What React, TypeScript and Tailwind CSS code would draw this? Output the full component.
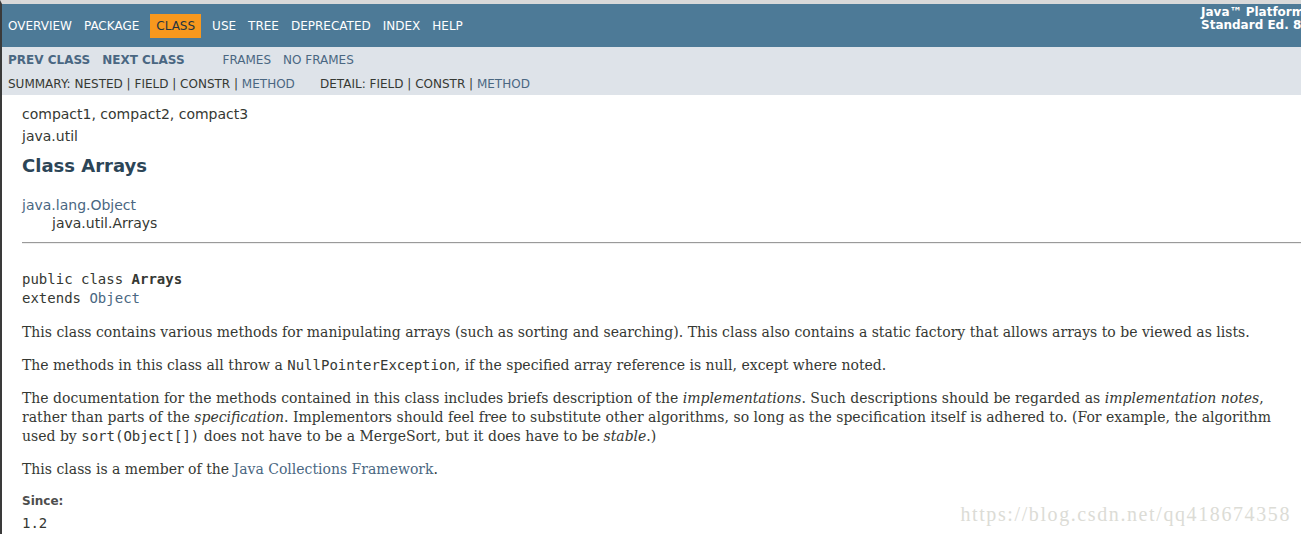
import React from 'react';

const sans = "font-['DejaVu_Sans',sans-serif]";
const serif = "font-['DejaVu_Serif',serif]";
const mono = "font-['DejaVu_Sans_Mono',monospace]";

const topNav = ['OVERVIEW', 'PACKAGE', 'CLASS', 'USE', 'TREE', 'DEPRECATED', 'INDEX', 'HELP'];

export default function App() {
  return (
    <div className="relative h-[534px] w-[1301px] overflow-hidden border-t-4 border-l-2 border-t-[#d9d9d9] border-l-[#3a3a3a] bg-white text-[#353833]">
      {/* Top navigation bar */}
      <div className={`flex h-[43px] items-start justify-between bg-[#4d7a97] text-white ${sans}`}>
        <ul className="flex pt-[10px] text-[12px] leading-[14px]">
          {topNav.map((item) =>
            item === 'CLASS' ? (
              <li key={item} className="mx-[5px] bg-[#f8981d] px-[6px] py-[5px] text-[#253441]">
                {item}
              </li>
            ) : (
              <li key={item} className="px-[6px] py-[5px]">
                {item}
              </li>
            )
          )}
        </ul>
        <div className="w-[100px] shrink-0 whitespace-nowrap pt-[2px] text-[12px] font-bold leading-[13px]">
          Java™ Platform
          <br />
          Standard Ed. 8
        </div>
      </div>

      {/* Sub navigation */}
      <div className={`bg-[#dee3e9] text-[12px] leading-[14px] ${sans}`}>
        <div className="flex pt-[6px] pb-[4px]">
          <span className="px-[6px] font-bold text-[#4a6782]">PREV CLASS</span>
          <span className="px-[6px] font-bold text-[#4a6782]">NEXT CLASS</span>
          <span className="ml-[26px] px-[6px] text-[#4a6782]">FRAMES</span>
          <span className="px-[6px] text-[#4a6782]">NO FRAMES</span>
        </div>
        <div className="flex pt-[6px] pb-[4px] pl-[6px]">
          <div className="w-[312px]">
            SUMMARY:&nbsp;NESTED&nbsp;|&nbsp;FIELD&nbsp;|&nbsp;CONSTR&nbsp;|&nbsp;
            <span className="text-[#4a6782]">METHOD</span>
          </div>
          <div>
            DETAIL:&nbsp;FIELD&nbsp;|&nbsp;CONSTR&nbsp;|&nbsp;
            <span className="text-[#4a6782]">METHOD</span>
          </div>
        </div>
      </div>

      {/* Class header */}
      <div className={`pl-[20px] pt-[9px] text-[14px] ${sans}`}>
        <div className="leading-[20px]">compact1, compact2, compact3</div>
        <div className="mt-[2px] leading-[20px]">java.util</div>
        <h2 className="mt-[8px] text-[18px] font-bold leading-[24px] text-[#2c4557]">Class Arrays</h2>
        <div className="mt-[18px] leading-[18px] text-[#4a6782]">java.lang.Object</div>
        <div className="pl-[30px] leading-[18px]">java.util.Arrays</div>
        <div className="mt-[10px] border-t border-b border-t-[#9a9a9a] border-b-[#eeeeee]" />
      </div>

      {/* Description */}
      <div className="pl-[20px] text-[14px]">
        <pre className={`mt-[26px] leading-[19px] ${mono}`}>
          public class <b>Arrays</b>
          {'\n'}extends <span className="text-[#4a6782]">Object</span>
        </pre>
        <div className={`leading-[19px] ${serif}`}>
          <p className="mt-[15px]">
            This class contains various methods for manipulating arrays (such as sorting and searching). This class also contains a static factory that allows arrays to be viewed as lists.
          </p>
          <p className="mt-[14px]">
            The methods in this class all throw a <code className={mono}>NullPointerException</code>, if the specified array reference is null, except where noted.
          </p>
          <p className="mt-[14px] pr-[20px]">
            The documentation for the methods contained in this class includes briefs description of the <i>implementations</i>. Such descriptions should be regarded as <i>implementation notes</i>, rather than parts of the <i>specification</i>. Implementors should feel free to substitute other algorithms, so long as the specification itself is adhered to. (For example, the algorithm used by <code className={mono}>sort(Object[])</code> does not have to be a MergeSort, but it does have to be <i>stable</i>.)
          </p>
          <p className="mt-[14px]">
            This class is a member of the <span className="text-[#4a6782]">Java Collections Framework</span>.
          </p>
        </div>
        <div className={`mt-[14px] text-[12px] font-bold leading-[16px] text-[#4e4e4e] ${sans}`}>Since:</div>
        <div className={`mt-[5px] leading-[19px] ${mono}`}>1.2</div>
      </div>

      {/* Watermark */}
      <div className="absolute bottom-[8px] right-[10px] font-['Liberation_Serif',serif] text-[20px] leading-[24px] tracking-[1.6px] text-[#dcdcd6]">
        https://blog.csdn.net/qq418674358
      </div>
    </div>
  );
}
